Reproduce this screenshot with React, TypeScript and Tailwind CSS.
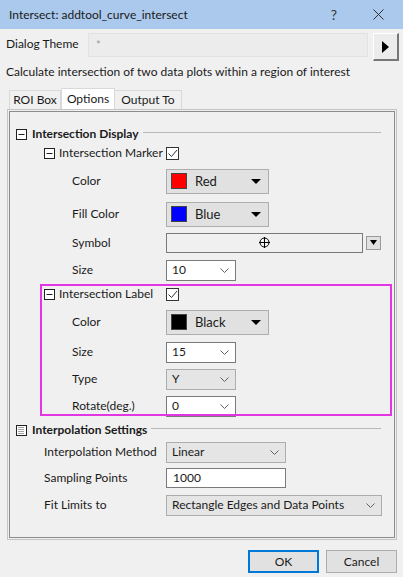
import React from 'react';

const font = "font-['Lato','Noto_Sans',sans-serif]";

const MinusBox = () => (
  <svg width="11" height="11" viewBox="0 0 11 11" className="shrink-0">
    <rect x="0.5" y="0.5" width="10" height="10" fill="#fff" stroke="#222" />
    <path d="M2.5 5.5h6" stroke="#222" />
  </svg>
);

const DottedBox = () => (
  <svg width="11" height="11" viewBox="0 0 11 11" className="shrink-0">
    <rect x="0.5" y="0.5" width="10" height="10" fill="#fff" stroke="#222" />
    <path d="M2.5 2.5h6M2.5 4.5h6M2.5 6.5h6M2.5 8.5h6" stroke="#444" strokeDasharray="1 1" />
  </svg>
);

const Check = () => (
  <div className="w-[13px] h-[13px] border border-[#333] bg-white flex items-center justify-center">
    <svg width="11" height="11" viewBox="0 0 11 11">
      <path d="M1.5 5.5l3 3 5.5-6.5" fill="none" stroke="#333" strokeWidth="1" />
    </svg>
  </div>
);

const Chevron = () => (
  <svg width="9" height="5" viewBox="0 0 9 5" className="shrink-0">
    <path d="M0.5 0.5l4 4 4-4" fill="none" stroke="#606060" />
  </svg>
);

const Tri = () => (
  <svg width="10" height="5" viewBox="0 0 10 5" className="shrink-0">
    <path d="M0 0h10L5 5z" fill="#000" />
  </svg>
);

const ColorDrop = ({ swatch, name }: { swatch: string; name: string }) => (
  <div className="w-[103px] h-[25px] bg-[#e1e1e1] border border-[#adadad] flex items-center pl-[4px] pr-[7px]">
    <div className="w-[16px] h-[16px] border border-[#444]" style={{ background: swatch }} />
    <span className="ml-[8px] flex-1 text-[13px]">{name}</span>
    <Tri />
  </div>
);

const Combo = ({ value, w, gray }: { value: string; w: string; gray?: boolean }) => (
  <div
    className={`${w} h-[21px] border flex items-center pl-[5px] pr-[6px] ${
      gray ? 'bg-[#e5e5e5] border-[#adadad]' : 'bg-white border-[#7a7a7a]'
    }`}
  >
    <span className="flex-1 whitespace-nowrap">{value}</span>
    <Chevron />
  </div>
);

const Row = ({ h, indent, label, children }: { h: string; indent: string; label: string; children: React.ReactNode }) => (
  <div className={`${h} flex items-center`}>
    <div className={`${indent} shrink-0 whitespace-nowrap`}>{label}</div>
    {children}
  </div>
);

const Section = ({ h, title, icon }: { h: string; title: string; icon: React.ReactNode }) => (
  <div className={`${h} flex items-center pl-[6px] pr-[13px]`}>
    {icon}
    <span className="ml-[5px] font-bold whitespace-nowrap">{title}</span>
    <div className="flex-1 ml-[4px] border-t border-[#b8b8b8] -mt-[3px]" />
  </div>
);

const SubHead = ({ title }: { title: string }) => (
  <div className="w-[122px] flex items-center">
    <MinusBox />
    <span className="ml-[4px] whitespace-nowrap">{title}</span>
  </div>
);

export default function App() {
  return (
    <div className={`w-[403px] h-[577px] bg-[#f0f0f0] text-[12px] text-[#1a1a1a] leading-[16px] overflow-hidden ${font}`}>
      {/* title bar */}
      <div className="h-[29px] bg-[#aac9ec] flex items-center pl-[9px]">
        <span className="flex-1">Intersect: addtool_curve_intersect</span>
        <span className="text-[14px] text-[#333] mr-[36px]">?</span>
        <svg width="11" height="11" viewBox="0 0 11 11" className="mr-[19px]">
          <path d="M0.5 0.5l10 10M10.5 0.5l-10 10" stroke="#333" strokeWidth="1" />
        </svg>
      </div>

      {/* dialog theme */}
      <div className="h-[30px] mt-[4px] flex items-start pl-[6px]">
        <span className="w-[82px] mt-[3px]">Dialog Theme</span>
        <div className="w-[280px] h-[24px] border border-[#e2e2e2] bg-[#ececec] pl-[7px] pt-[3px] text-[#9a9a9a] text-[11px]">*</div>
        <div className="ml-[5px] w-[26px] h-[28px] bg-[#ececec] border-t border-l border-white border-r-2 border-b-2 border-r-[#777] border-b-[#777] flex items-center justify-center">
          <svg width="7" height="12" viewBox="0 0 7 12">
            <path d="M0 0l7 6-7 6z" fill="#000" />
          </svg>
        </div>
      </div>

      <div className="pl-[6px] mt-[1px] whitespace-nowrap">Calculate intersection of two data plots within a region of interest</div>

      {/* tabs */}
      <div className="mt-[8px] pl-[9px] flex items-end h-[21px]">
        <div className="w-[52px] h-[19px] border border-b-0 border-[#d9d9d9] bg-[#f0f0f0] flex items-center justify-center">ROI Box</div>
        <div className="w-[54px] h-[21px] border border-b-0 border-[#d9d9d9] bg-white flex items-center justify-center">Options</div>
        <div className="w-[67px] h-[19px] border border-b-0 border-l-0 border-[#d9d9d9] bg-[#f0f0f0] flex items-center justify-center">Output To</div>
      </div>

      {/* panel */}
      <div className="relative ml-[7px] w-[390px] h-[431px] border border-[#c4c4c4] p-[1px]">
        <div className="h-full border border-[#8c8c8c] pt-[12px]">
          <Section h="h-[20px]" title="Intersection Display" icon={<MinusBox />} />
          <div className="h-[18px] flex items-center pl-[34px]">
            <SubHead title="Intersection Marker" />
            <Check />
          </div>
          <Row h="h-[38px]" indent="pl-[62px] w-[156px]" label="Color">
            <ColorDrop swatch="#ff0000" name="Red" />
          </Row>
          <Row h="h-[28px]" indent="pl-[62px] w-[156px]" label="Fill Color">
            <ColorDrop swatch="#0000ff" name="Blue" />
          </Row>
          <Row h="h-[29px]" indent="pl-[62px] w-[156px]" label="Symbol">
            <div className="w-[197px] h-[20px] border border-[#7a7a7a] bg-[#f0f0f0] flex items-center justify-center">
              <svg width="11" height="11" viewBox="0 0 11 11">
                <circle cx="5.5" cy="5.5" r="4.5" fill="none" stroke="#000" />
                <path d="M5.5 0v11M0 5.5h11" stroke="#000" />
              </svg>
            </div>
            <div className="ml-[3px] w-[15px] h-[14px] bg-[#e1e1e1] border border-[#9a9a9a] flex items-center justify-center">
              <svg width="7" height="5" viewBox="0 0 7 5">
                <path d="M0 0h7L3.5 5z" fill="#000" />
              </svg>
            </div>
          </Row>
          <Row h="h-[26px]" indent="pl-[62px] w-[156px]" label="Size">
            <Combo value="10" w="w-[70px]" />
          </Row>
          <div className="h-[22px] flex items-center pl-[34px]">
            <SubHead title="Intersection Label" />
            <Check />
          </div>
          <Row h="h-[34px]" indent="pl-[62px] w-[156px]" label="Color">
            <ColorDrop swatch="#000000" name="Black" />
          </Row>
          <Row h="h-[26px]" indent="pl-[62px] w-[156px]" label="Size">
            <Combo value="15" w="w-[70px]" />
          </Row>
          <Row h="h-[28px]" indent="pl-[62px] w-[156px]" label="Type">
            <Combo value="Y" w="w-[70px]" gray />
          </Row>
          <Row h="h-[26px]" indent="pl-[62px] w-[156px]" label="Rotate(deg.)">
            <Combo value="0" w="w-[70px]" />
          </Row>
          <Section h="h-[22px]" title="Interpolation Settings" icon={<DottedBox />} />
          <Row h="h-[22px]" indent="pl-[34px] w-[156px]" label="Interpolation Method">
            <Combo value="Linear" w="w-[120px]" gray />
          </Row>
          <Row h="h-[30px]" indent="pl-[34px] w-[156px]" label="Sampling Points">
            <div className="w-[120px] h-[20px] bg-white border border-[#7a7a7a] pl-[6px] flex items-center">1000</div>
          </Row>
          <Row h="h-[24px]" indent="pl-[34px] w-[156px]" label="Fit Limits to">
            <Combo value="Rectangle Edges and Data Points" w="w-[216px]" gray />
          </Row>
        </div>
        {/* highlight annotation */}
        <div className="absolute left-[32px] top-[174px] w-[352px] h-[132px] border-2 border-[#e336e3] pointer-events-none" />
      </div>

      {/* buttons */}
      <div className="mt-[10px] flex justify-end pr-[6px] gap-[7px]">
        <div className="w-[71px] h-[23px] bg-[#e1e1e1] border-2 border-[#0078d7] flex items-center justify-center">OK</div>
        <div className="w-[71px] h-[23px] bg-[#e1e1e1] border border-[#adadad] flex items-center justify-center">Cancel</div>
      </div>
    </div>
  );
}
